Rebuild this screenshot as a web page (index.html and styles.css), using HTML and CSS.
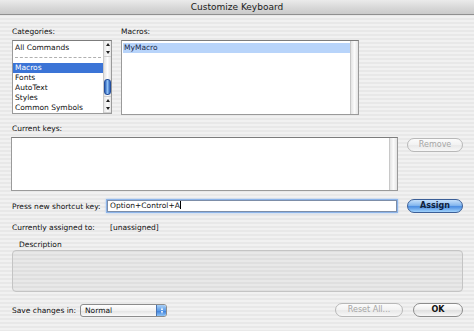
FILE: index.html
```html
<!DOCTYPE html>
<html>
<head>
<meta charset="utf-8">
<link rel="stylesheet" href="styles.css">
</head>
<body>
<div class="window">
  <div class="titlebar">Customize Keyboard</div>
  <div class="content">
    <div class="row-lists">
      <div class="col col-cat">
        <div class="label">Categories:</div>
        <div class="listbox cat-list">
          <div class="items">
            <div class="item">All Commands</div>
            <div class="sep"></div>
            <div class="item sel">Macros</div>
            <div class="item">Fonts</div>
            <div class="item">AutoText</div>
            <div class="item">Styles</div>
            <div class="item">Common Symbols</div>
          </div>
          <div class="vscroll">
            <div class="arrows"><span class="up"></span><span class="down"></span></div>
            <div class="track"><div class="thumb"></div></div>
            <div class="arrows"><span class="up"></span><span class="down"></span></div>
          </div>
        </div>
      </div>
      <div class="col col-mac">
        <div class="label">Macros:</div>
        <div class="listbox mac-list">
          <div class="items">
            <div class="item sel-light">MyMacro</div>
          </div>
          <div class="vtrack"></div>
        </div>
      </div>
    </div>

    <div class="label keys-label">Current keys:</div>
    <div class="row-keys">
      <div class="listbox keys-list">
        <div class="items"></div>
        <div class="vtrack"></div>
      </div>
      <div class="btn disabled remove">Remove</div>
    </div>

    <div class="row-press">
      <div class="label press-label">Press new shortcut key:</div>
      <div class="field">Option+Control+A<span class="caret"></span></div>
      <div class="btn default assign">Assign</div>
    </div>

    <div class="row-assigned">
      <div class="label assigned-label">Currently assigned to:</div>
      <div class="label">[unassigned]</div>
    </div>

    <div class="label desc-label">Description</div>
    <div class="groupbox"></div>

    <div class="row-bottom">
      <div class="label save-label">Save changes in:</div>
      <div class="popup">
        <span class="popup-text">Normal</span>
        <span class="popup-cap"><span class="pa-up"></span><span class="pa-down"></span></span>
      </div>
      <div class="spacer"></div>
      <div class="btn disabled reset">Reset All...</div>
      <div class="btn ok">OK</div>
    </div>
  </div>
</div>
</body>
</html>
```
FILE: styles.css
```css
html, body {
  margin: 0;
  padding: 0;
}
body {
  width: 474px;
  height: 331px;
  overflow: hidden;
  font-family: "DejaVu Sans", "Lucida Grande", sans-serif;
  font-size: 7.5px;
  color: #111;
  background: repeating-linear-gradient(to bottom, #f1f1f1 0px, #f1f1f1 2px, #e8e8e8 2px, #e8e8e8 4px);
}
.window {
  width: 474px;
  height: 331px;
  display: flex;
  flex-direction: column;
}
.titlebar {
  height: 15px;
  line-height: 15px;
  text-align: center;
  font-size: 9px;
  color: #1a1a1a;
  background: linear-gradient(to bottom, #ebebeb, #d6d6d6 60%, #cacaca);
  border-bottom: 1px solid #8f8f8f;
  box-sizing: border-box;
}
.content {
  padding: 0 11px 0 12px;
  display: flex;
  flex-direction: column;
}
.label {
  line-height: 9px;
  height: 9px;
  white-space: nowrap;
}

/* row 1 */
.row-lists {
  margin-top: 12px;
  display: flex;
  gap: 9px;
}
.col {
  display: flex;
  flex-direction: column;
  gap: 4px;
}
.col-cat { width: 100px; }
.col-mac { width: 238px; }
.listbox {
  display: flex;
  background: #fff;
  border: 1px solid #9a9a9a;
  border-top-color: #7c7c7c;
  box-sizing: border-box;
  overflow: hidden;
}
.listbox .items {
  flex: 1;
  padding-top: 2px;
  overflow: hidden;
}
.cat-list { height: 74px; }
.mac-list { height: 75px; }
.item {
  height: 10px;
  line-height: 10px;
  padding-left: 2px;
  white-space: nowrap;
  font-size: 7.5px;
}
.item.sel {
  background: #3b74d6;
  color: #fff;
}
.sep {
  height: 10px;
  position: relative;
}
.sep::after {
  content: "";
  position: absolute;
  left: 2px;
  right: 2px;
  top: 4px;
  border-top: 1px dashed #b0b0b0;
}
.item.sel-light {
  background: #b8d4fa;
  margin-left: 1px;
  padding-left: 1px;
  color: #1a2a4a;
}
.vscroll {
  width: 7px;
  border-left: 1px solid #c8c8c8;
  display: flex;
  flex-direction: column;
  background: #f6f6f6;
}
.arrows {
  height: 15px;
  display: flex;
  flex-direction: column;
  align-items: center;
  justify-content: space-around;
  border-top: 1px solid #d0d0d0;
  border-bottom: 1px solid #d0d0d0;
  background: linear-gradient(to right, #e6e6e6, #fafafa, #e6e6e6);
}
.arrows:first-child { border-top: none; }
.up, .down, .pa-up, .pa-down {
  width: 0;
  height: 0;
  border-left: 2px solid transparent;
  border-right: 2px solid transparent;
}
.up { border-bottom: 3px solid #222; }
.down { border-top: 3px solid #222; }
.track {
  flex: 1;
  display: flex;
  flex-direction: column;
  justify-content: flex-end;
  align-items: center;
  background: linear-gradient(to right, #e2e2e2, #fdfdfd, #e2e2e2);
  padding-bottom: 1px;
}
.thumb {
  width: 5px;
  height: 14px;
  border-radius: 3px;
  background: linear-gradient(to right, #2b5fb8, #8ec0f4 50%, #2b5fb8);
  border: 1px solid #244f9c;
}
.vtrack {
  width: 7px;
  border-left: 1px solid #c8c8c8;
  background: linear-gradient(to right, #e4e4e4, #fbfbfb, #e4e4e4);
}

/* row 2 */
.keys-label { margin-top: 9px; }
.row-keys {
  margin-top: 4px;
  display: flex;
  align-items: flex-start;
}
.keys-list {
  width: 388px;
  height: 54px;
  margin-left: -1px;
}
.btn {
  box-sizing: border-box;
  height: 14px;
  line-height: 12px;
  text-align: center;
  border-radius: 7px;
  border: 1px solid #8c8c8c;
  background: linear-gradient(to bottom, #ffffff, #f0f0f0 45%, #e0e0e0 55%, #f8f8f8);
  font-size: 8px;
  color: #111;
  white-space: nowrap;
}
.btn.disabled {
  border-color: #b8b8b8;
  color: #a6a6a6;
  background: linear-gradient(to bottom, #fbfbfb, #f2f2f2 50%, #e9e9e9 55%, #f7f7f7);
}
.remove {
  width: 56px;
  margin-left: 9px;
  margin-top: 1px;
}

/* row 3 */
.row-press {
  margin-top: 8px;
  height: 14px;
  display: flex;
  align-items: center;
}
.press-label { width: 95px; }
.field {
  box-sizing: border-box;
  width: 290px;
  height: 12px;
  line-height: 10px;
  padding-left: 2px;
  background: #fff;
  border: 1px solid #7d8ea8;
  box-shadow: 0 0 0 1px #8db5ea, 0 0 2px 1px #a9c8f0;
  font-size: 7.5px;
  white-space: nowrap;
}
.caret {
  display: inline-block;
  width: 1px;
  height: 8px;
  background: #000;
  vertical-align: -1px;
}
.assign {
  width: 56px;
  margin-left: 10px;
  font-weight: bold;
  color: #10213a;
  border-color: #3c5f97;
  background: linear-gradient(to bottom, #c6e0fb, #86b8ee 45%, #4b8de2 55%, #a2d3fb);
}

/* row 4 */
.row-assigned {
  margin-top: 10px;
  display: flex;
}
.assigned-label { width: 98px; }

/* description */
.desc-label {
  margin-top: 8px;
  margin-left: 7px;
}
.groupbox {
  margin-top: 1px;
  height: 42px;
  border: 1px solid #c4c4c4;
  border-radius: 4px;
  background: rgba(0, 0, 0, 0.035);
  box-sizing: border-box;
}

/* bottom */
.row-bottom {
  margin-top: 11px;
  height: 14px;
  display: flex;
  align-items: center;
}
.save-label { width: 68px; }
.popup {
  box-sizing: border-box;
  width: 87px;
  height: 13px;
  display: flex;
  border: 1px solid #8c8c8c;
  border-radius: 3px;
  background: linear-gradient(to bottom, #ffffff, #f1f1f1 50%, #e4e4e4 55%, #fafafa);
  overflow: hidden;
}
.popup-text {
  flex: 1;
  line-height: 11px;
  padding-left: 4px;
  font-size: 7.5px;
}
.popup-cap {
  width: 9px;
  display: flex;
  flex-direction: column;
  align-items: center;
  justify-content: center;
  gap: 1px;
  background: linear-gradient(to bottom, #a9d0f7, #5d9ce6 50%, #3e80dc 55%, #8fc4f5);
  border-left: 1px solid #4a73b0;
}
.pa-up { border-bottom: 3px solid #fff; border-left-width: 1.5px; border-right-width: 1.5px; }
.pa-down { border-top: 3px solid #fff; border-left-width: 1.5px; border-right-width: 1.5px; }
.spacer { flex: 1; }
.reset { width: 68px; }
.ok {
  width: 50px;
  margin-left: 10px;
  font-weight: bold;
}
```
